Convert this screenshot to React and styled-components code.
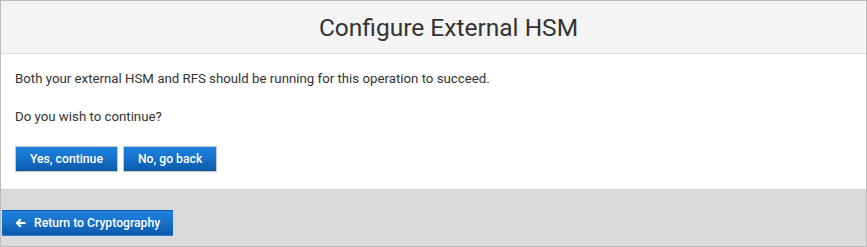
import React from 'react'
import styled, { createGlobalStyle } from 'styled-components'

const GlobalStyle = createGlobalStyle`
  html, body {
    margin: 0;
    padding: 0;
    background: #ffffff;
  }
  body {
    font-family: Roboto, "Liberation Sans", Arial, sans-serif;
  }
`

const Frame = styled.div`
  width: 867px;
  height: 247px;
  box-sizing: border-box;
  border: 1px solid #bcbcbc;
  display: flex;
  flex-direction: column;
  background: #dadada;
`

const Header = styled.div`
  height: 52px;
  flex-shrink: 0;
  padding-left: 30px;
  background: #f4f4f4;
  border-bottom: 1px solid #dcdcdc;
  display: flex;
  align-items: center;
  justify-content: center;
  font-size: 24.5px;
  color: #333333;
`

const Body = styled.div`
  background: #ffffff;
  padding: 16px 14px 16px;
  border-bottom: 1px solid #d0d0d0;
  height: 136px;
  flex-shrink: 0;
  box-sizing: border-box;
`

const Text = styled.p`
  margin: 0 0 20px;
  font-size: 13.25px;
  line-height: 18px;
  color: #333333;
`

const Actions = styled.div`
  display: flex;
  gap: 5px;
  margin-top: 12px;
`

const Button = styled.button`
  height: 26px;
  padding: 0 ${(p) => p.$pad || 14}px;
  border: 1px solid ${(p) => (p.$bare ? 'transparent' : '#c8c8c8')};
  background: linear-gradient(to bottom, #1f82df 0%, #1670c9 50%, #0b5aa9 100%);
  color: #ffffff;
  font-family: Roboto, "Liberation Sans", Arial, sans-serif;
  font-size: 12.2px;
  font-weight: 500;
  display: flex;
  align-items: center;
  gap: 8px;
  cursor: pointer;
`

const Footer = styled.div`
  flex: 1;
  padding: 20px 1px 0;
`

const Arrow = () => (
  <svg width="11" height="10" viewBox="0 0 11 10">
    <path d="M5 0.5 L0.5 5 L5 9.5 L6.6 8 L4.6 6.1 H10.5 V3.9 H4.6 L6.6 2 Z" fill="#ffffff" />
  </svg>
)

export default function App() {
  return (
    <>
      <GlobalStyle />
      <Frame>
        <Header>Configure External HSM</Header>
        <Body>
          <Text>Both your external HSM and RFS should be running for this operation to succeed.</Text>
          <Text>Do you wish to continue?</Text>
          <Actions>
            <Button>Yes, continue</Button>
            <Button>No, go back</Button>
          </Actions>
        </Body>
        <Footer>
          <Button $bare $pad={12}>
            <Arrow />
            Return to Cryptography
          </Button>
        </Footer>
      </Frame>
    </>
  )
}
